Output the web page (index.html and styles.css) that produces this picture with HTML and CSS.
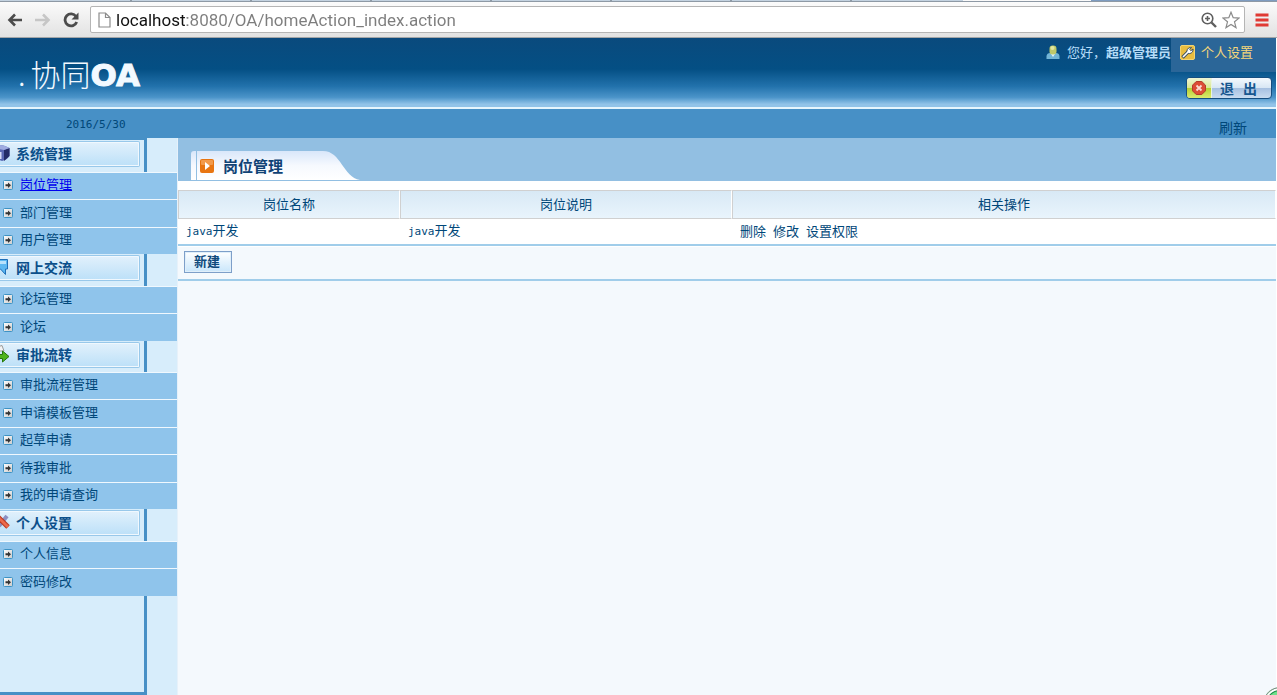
FILE: index.html
```
<!DOCTYPE html>
<html lang="zh-CN">
<head>
  <meta charset="UTF-8" />
  <meta name="viewport" content="width=device-width, initial-scale=1.0" />
  <title>协同OA</title>
  <link rel="stylesheet" href="styles.css">
</head>
<body>
  <!-- shared icons -->
  <svg class="defs" width="0" height="0" aria-hidden="true">
    <defs>
      <linearGradient id="tile" x1="0" y1="0" x2="1" y2="1">
        <stop offset="0" stop-color="#ffffff"/>
        <stop offset="1" stop-color="#c9c9c9"/>
      </linearGradient>
      <symbol id="arrow" viewBox="0 0 10 10">
        <rect x="0.5" y="0.5" width="9" height="9" rx="1" fill="url(#tile)" stroke="#3d92c4"/>
        <path d="M2.500 4.300h2.500V2.500l3 2.700l-3 2.700V6.200H2.500z" fill="#333"/>
      </symbol>
    </defs>
  </svg>

  <div class="browser">
    <div class="tab-strip"><i></i><i></i><i></i><i></i><i></i><i></i><i></i></div>
    <div class="toolbar">
      <button class="tool-btn" aria-label="后退">
        <svg width="18" height="16" viewBox="0 0 18 16"><path d="M16 8H4M9 2.5L3.500 8L9 13.500" fill="none" stroke="#4b4b4b" stroke-width="2.600"/></svg>
      </button>
      <button class="tool-btn" aria-label="前进">
        <svg width="18" height="16" viewBox="0 0 18 16"><path d="M1 8H14M9 2.500L14.500 8L9 13.500" fill="none" stroke="#c6c6c6" stroke-width="2.600"/></svg>
      </button>
      <button class="tool-btn" aria-label="重新加载">
        <svg width="18" height="16" viewBox="0 0 18 16"><path d="M14 4.500A6 6 0 1 0 14.700 10" fill="none" stroke="#4b4b4b" stroke-width="2.800"/><path d="M16.500 0.500V7.500H9.500z" fill="#4b4b4b"/></svg>
      </button>
      <div class="address">
        <svg width="13" height="16" viewBox="0 0 13 16"><path d="M1 1h6.500l4.500 4.500V15H1zM7.500 1v4.500H12" fill="#fff" stroke="#8c8c8c" stroke-width="1.200"/></svg>
        <input class="url" type="text" aria-label="地址" value="localhost:8080/OA/homeAction_index.action">
        <svg width="16" height="16" viewBox="0 0 16 16"><circle cx="6.500" cy="6.500" r="5.300" fill="none" stroke="#5f5f5f" stroke-width="1.600"/><path d="M4 6.500h5M6.500 4v5" stroke="#5f5f5f" stroke-width="1.600"/><path d="M10.500 10.500L15 15" stroke="#5f5f5f" stroke-width="2.400"/></svg>
        <svg width="18" height="18" viewBox="0 0 18 18"><path d="M9 1.200L11.200 6.700L17 7.100L12.500 10.800L14 16.600L9 13.400L4 16.600L5.500 10.800L1 7.100L6.800 6.700z" fill="#fff" stroke="#8a8a8a" stroke-width="1.200"/></svg>
      </div>
      <button class="tool-btn menu-btn" aria-label="菜单">
        <svg width="14" height="14" viewBox="0 0 14 14"><path d="M0.500 2h13M0.500 7h13M0.500 12h13" stroke="#e03a34" stroke-width="2.800"/></svg>
      </button>
    </div>
  </div>

  <div class="app">
    <header class="top">
      <h1 class="logo"><span>.</span><span class="logo-cn">协同</span><b>OA</b></h1>
      <div class="top-right">
        <div class="account">
          <span class="hello">
            <svg width="14" height="15" viewBox="0 0 14 15"><path d="M0.500 14V11Q1 8 4 8h6q3 0 3.500 3v3z" fill="#72b5d6"/><path d="M5 9l2 3l2-3z" fill="#e4f4fa"/><rect x="3.500" y="0.500" width="7" height="9" rx="3.200" fill="#bfc96a"/><rect x="4.500" y="1" width="4" height="4" rx="2" fill="#e1e7a0"/></svg>
            您好，<b>超级管理员</b>
          </span>
          <a class="settings" href="#">
            <svg width="15" height="15" viewBox="0 0 15 15"><rect x="0.500" y="0.500" width="14" height="14" rx="1.500" fill="#e9bd3f" stroke="#f3d371"/><path d="M2.500 12.500L8.500 6.500" stroke="#3c5062" stroke-width="3.400"/><path d="M7.500 8a3.600 3.600 0 0 1 3-5.500h1L9.800 4.500l1 1.200L13 4v1A3.600 3.600 0 0 1 7.500 8z" fill="#fff" stroke="#3c5062"/><path d="M3 12L8.500 6.500" stroke="#fff" stroke-width="1.600"/></svg>
            个人设置
          </a>
        </div>
        <button class="exit">
          <span class="exit-icon">
            <svg width="14" height="14" viewBox="0 0 14 14"><path d="M4.200 0.500h5.600l3.700 3.700v5.600l-3.700 3.700H4.200L0.500 9.800V4.200z" fill="#dc4c35" stroke="#b23a2a"/><path d="M4.500 4.500l5 5M9.500 4.500l-5 5" stroke="#fbd9d0" stroke-width="1.800"/></svg>
          </span>
          <span class="exit-text"><span>退</span><span>出</span></span>
        </button>
      </div>
    </header>

    <div class="info-bar">
      <span class="date">2016/5/30</span>
      <a class="refresh" href="#">刷新</a>
    </div>

    <div class="body">
      <nav class="sidebar">
        <section>
          <h2 class="group"><span class="group-box">
            <svg width="12" height="18" viewBox="0 0 12 18"><path d="M-6 4Q0 0 5 2L9.500 4V12Q7 16 2 17L-6 14z" fill="#5a69b4"/><path d="M4 6L9.500 4V12L4 17z" fill="#232c68"/><path d="M-6 4Q0 0 5 2L9.500 4L4 6z" fill="#9fabe0"/><path d="M0.500 8v7" stroke="#d5dcf6" stroke-width="2"/></svg>
            系统管理</span></h2>
          <ul>
            <li><svg width="10" height="10"><use href="#arrow"/></svg><a class="active" href="#">岗位管理</a></li>
            <li><svg width="10" height="10"><use href="#arrow"/></svg><a href="#">部门管理</a></li>
            <li><svg width="10" height="10"><use href="#arrow"/></svg><a href="#">用户管理</a></li>
          </ul>
        </section>
        <section>
          <h2 class="group"><span class="group-box">
            <svg width="12" height="18" viewBox="0 0 12 18"><path d="M-4 1.500H7.500V11H5.500V16.500L0.500 11H-4z" fill="#5cb8f2" stroke="#1f6fb8"/><path d="M-2 3h8v3h-8z" fill="#b8e2fc"/></svg>
            网上交流</span></h2>
          <ul>
            <li><svg width="10" height="10"><use href="#arrow"/></svg><a href="#">论坛管理</a></li>
            <li><svg width="10" height="10"><use href="#arrow"/></svg><a href="#">论坛</a></li>
          </ul>
        </section>
        <section>
          <h2 class="group"><span class="group-box">
            <svg width="12" height="18" viewBox="0 0 12 18"><path d="M-3 2L2 0.500L4 6H-3z" fill="#f3f3f3" stroke="#999"/><path d="M-3 9.500H2.500V6L9 11.500L2.500 17V13.500H-3z" fill="#4eb31c" stroke="#23760a"/></svg>
            审批流转</span></h2>
          <ul>
            <li><svg width="10" height="10"><use href="#arrow"/></svg><a href="#">审批流程管理</a></li>
            <li><svg width="10" height="10"><use href="#arrow"/></svg><a href="#">申请模板管理</a></li>
            <li><svg width="10" height="10"><use href="#arrow"/></svg><a href="#">起草申请</a></li>
            <li><svg width="10" height="10"><use href="#arrow"/></svg><a href="#">待我审批</a></li>
            <li><svg width="10" height="10"><use href="#arrow"/></svg><a href="#">我的申请查询</a></li>
          </ul>
        </section>
        <section>
          <h2 class="group"><span class="group-box">
            <svg width="12" height="18" viewBox="0 0 12 18"><path d="M-1 13L7 3" stroke="#8c8fc0" stroke-width="4"/><path d="M-2 4L8 14" stroke="#b8371f" stroke-width="5"/><path d="M-2 4L8 14" stroke="#ec6a4c" stroke-width="3"/></svg>
            个人设置</span></h2>
          <ul>
            <li><svg width="10" height="10"><use href="#arrow"/></svg><a href="#">个人信息</a></li>
            <li><svg width="10" height="10"><use href="#arrow"/></svg><a href="#">密码修改</a></li>
          </ul>
        </section>
        <div class="side-rest"></div>
      </nav>

      <main class="content">
        <div class="title-bar">
          <svg class="tab-bg" width="170" height="29" viewBox="0 0 170 29">
            <defs><linearGradient id="tabFill" x1="0" y1="0" x2="0" y2="1"><stop offset="0" stop-color="#d9e7fa"/><stop offset="0.500" stop-color="#f6f9fe"/><stop offset="1" stop-color="#fff"/></linearGradient></defs>
            <path d="M0 29V3Q0 0 3 0H132C150 0 152 26 169 29z" fill="url(#tabFill)"/>
            <path d="M5.500 0V29" stroke="#92bfe2"/>
          </svg>
          <div class="title">
            <svg width="14" height="14" viewBox="0 0 14 14"><rect width="14" height="14" rx="2" fill="#e87511"/><rect x="1" y="1" width="12" height="5" rx="1" fill="#f29a4b"/><path d="M5 3l5 4l-5 4z" fill="#fff"/></svg>
            <h2>岗位管理</h2>
          </div>
        </div>

        <table class="list">
          <colgroup><col class="col-name"><col class="col-desc"><col></colgroup>
          <thead>
            <tr><th>岗位名称</th><th>岗位说明</th><th>相关操作</th></tr>
          </thead>
          <tbody>
            <tr>
              <td><span class="en">java</span>开发</td>
              <td><span class="en">java</span>开发</td>
              <td class="ops"><a href="#">删除</a><a href="#">修改</a><a href="#">设置权限</a></td>
            </tr>
          </tbody>
        </table>

        <div class="actions">
          <button class="new-btn">新建</button>
        </div>
      </main>
    </div>
  </div>
  <div class="float-ball"></div>
</body>
</html>
```

FILE: styles.css
```
* {
  box-sizing: border-box;
}
body {
  margin: 0;
  min-height: 100vh;
  display: flex;
  flex-direction: column;
  overflow-x: hidden;
  background: #fff;
  color: #004779;
  font-family: "Noto Sans CJK SC", "Liberation Sans", sans-serif;
  font-size: 13px;
  line-height: 18px;
}
h1, h2, ul {
  margin: 0;
  padding: 0;
  list-style: none;
}
a {
  color: inherit;
  text-decoration: none;
}
button {
  font-family: inherit;
  padding: 0;
  cursor: pointer;
}
svg {
  display: block;
  flex: none;
}
.defs {
  position: absolute;
}

/* browser bar */
.tab-strip {
  display: flex;
  height: 2px;
  padding-left: 12px;
  background: linear-gradient(to right, #c3d2e0 963px, #fafafa 963px, #fafafa 1091px, #7e9cc0 1091px);
  border-bottom: 1px solid #8e99a5;
}
.tab-strip i {
  width: 120px;
  border-right: 2px solid #8e99a5;
}
.toolbar {
  display: flex;
  align-items: center;
  height: 36px;
  padding: 0 8px 0 6px;
  gap: 10px;
  background: linear-gradient(#fbfbfb, #e2e2e2);
  border-bottom: 1px solid #a3a6a8;
}
.tool-btn {
  border: 0;
  background: none;
}
.address {
  flex: 1;
  display: flex;
  align-items: center;
  gap: 5px;
  height: 27px;
  padding: 0 4px 0 7px;
  background: #fff;
  border: 1px solid #b5b5b5;
  border-radius: 2px;
}
.url {
  flex: 1;
  min-width: 0;
  height: 25px;
  padding: 0;
  border: 0;
  outline: 0;
  font-family: Roboto, "Open Sans", sans-serif;
  font-size: 17px;
  color: transparent;
  background: linear-gradient(to right, #111 71px, #7d7d7d 71px);
  -webkit-background-clip: text;
  background-clip: text;
}

/* header */
.app {
  flex: 1;
  display: flex;
  flex-direction: column;
  margin-right: 1px;
}
.top {
  display: flex;
  justify-content: space-between;
  height: 71px;
  background: linear-gradient(#0a4a7d 0, #044f84 45%, #2272ac 70%, #4b94c9 86%, #92c3e8 96%);
  border-bottom: 2px solid #e6f5fd;
}
.logo {
  display: flex;
  align-items: baseline;
  padding-left: 18px;
  color: #f2f9ff;
  font-size: 30px;
  font-weight: 300;
  line-height: 70px;
}
.logo-cn {
  margin-left: 5px;
}
.logo b {
  font-family: "DejaVu Sans", sans-serif;
  font-size: 31px;
  font-weight: 700;
  -webkit-text-stroke: 1px #f2f9ff;
}
.top-right {
  display: flex;
  flex-direction: column;
  align-items: flex-end;
  gap: 5px;
}
.account {
  display: flex;
  height: 34px;
}
.hello {
  display: flex;
  align-items: center;
  height: 28px;
  color: #b5dcf8;
}
.hello svg {
  margin-right: 7px;
}
.settings {
  display: flex;
  align-items: center;
  gap: 6px;
  width: 105px;
  padding: 0 0 6px 9px;
  background: #2b6698;
  color: #f5d67b;
}
.exit {
  display: flex;
  align-items: stretch;
  width: 86px;
  height: 22px;
  margin-right: 4px;
  border: 1px solid #164e80;
  border-radius: 4px;
  overflow: hidden;
  background: linear-gradient(#f4f9fd 0, #d7e6f4 50%, #a5bfe0 50%, #c9dcf0 100%);
  color: #17578f;
  font-size: 14px;
  font-weight: bold;
  line-height: 20px;
}
.exit-icon {
  display: flex;
  align-items: center;
  padding: 0 5px;
  background: linear-gradient(#eef5d5, #d8e68f 50%, #b4cf2f 50%, #dbe96f);
  border-right: 1px solid #e9f3e0;
}
.exit-text {
  display: flex;
  gap: 9px;
  padding-left: 8px;
}
.info-bar {
  display: flex;
  justify-content: space-between;
  align-items: flex-start;
  height: 29px;
  padding: 7px 29px 0 66px;
  background: #4790c6;
}
.date {
  font-family: "DejaVu Sans Mono", monospace;
  font-size: 11px;
}
.refresh {
  font-size: 14px;
  line-height: 22px;
}

/* left menu */
.body {
  flex: 1;
  display: flex;
}
.sidebar {
  display: flex;
  flex-direction: column;
  width: 177px;
  flex: none;
  background: #d7edfb;
}
.group {
  width: 147px;
  height: 32px;
  padding-top: 1px;
  border-right: 3px solid #4790c6;
  font-size: 14px;
  color: #0b4f8a;
}
.sidebar section:first-child .group {
  height: 34px;
  border-top: 2px solid #4790c6;
}
.sidebar section:nth-child(3) .group {
  height: 31px;
}
.group-box {
  display: flex;
  align-items: center;
  gap: 4px;
  width: 140px;
  height: 26px;
  padding-bottom: 2px;
  background: linear-gradient(#e2f1fc, #bce0f8);
  border: 1px solid #98c8ea;
  border-left: 0;
  border-radius: 0 2px 2px 0;
  box-shadow: inset -1px 1px 0 #f0f8fe, inset 0 -1px 0 #f0f8fe;
}
.sidebar li {
  display: flex;
  align-items: center;
  gap: 7px;
  height: 27px;
  padding: 0 0 2px 3px;
  background: #8fc4eb;
  border-top: 1px solid #f0f8fe;
}
.sidebar li:nth-child(even) {
  height: 28px;
}
.sidebar li a {
  padding-bottom: 2px;
}
.sidebar .active {
  color: #0000ee;
  text-decoration: underline;
}
.side-rest {
  flex: 1;
  width: 147px;
  border-right: 3px solid #4790c6;
  border-bottom: 3px solid #4790c6;
}

/* content */
.content {
  flex: 1;
  min-width: 0;
  background: #f4f9fd;
  border-left: 1px solid #e6f1fa;
}
.title-bar {
  position: relative;
  height: 43px;
  padding: 13px 0 0 22px;
  background: #92bfe2;
}
.tab-bg {
  position: absolute;
  left: 13px;
  bottom: 1px;
}
.title {
  position: relative;
  display: flex;
  align-items: center;
  gap: 9px;
  height: 29px;
}
.title h2 {
  font-size: 15px;
  color: #0f4275;
}
.list {
  width: 100%;
  table-layout: fixed;
  border-collapse: separate;
  border-spacing: 0;
  border-top: 9px solid #fff;
  border-bottom: 2px solid #a0cdea;
  background: #fff;
}
.col-name {
  width: 222px;
}
.col-desc {
  width: 332px;
}
.list th {
  height: 29px;
  padding: 0 0 2px;
  font-weight: normal;
  background: linear-gradient(#d8e9f5, #e9f4fc);
  border: 1px solid #d0d0d0;
  border-right-color: #fff;
}
.list td {
  height: 25px;
  padding: 0 8px 2px;
}
.en {
  font-family: "DejaVu Sans Mono", monospace;
  font-size: 11px;
}
.ops a {
  margin-right: 7px;
}
.actions {
  height: 35px;
  padding: 4px 6px;
  border-top: 1px solid #fff;
  border-bottom: 2px solid #a0cdea;
}
.new-btn {
  display: block;
  width: 48px;
  height: 22px;
  padding: 0 2px 2px 0;
  border: 1px solid #7d9fc9;
  background: linear-gradient(#fff, #c9e6fb);
  box-shadow: inset 0 0 0 1px #e0effa;
  color: #0f4a7c;
  font-size: 13px;
  font-weight: bold;
  line-height: 18px;
}

/* green desktop ball peeking in at the corner */
.float-ball {
  position: fixed;
  right: -20px;
  bottom: -26px;
  width: 34px;
  height: 34px;
  border: 1px solid #7f8f86;
  border-radius: 50%;
  background: #6fe08a;
  box-shadow: inset 0 0 0 2px #fff, inset 0 0 0 3px #1d8a4a;
}
```
